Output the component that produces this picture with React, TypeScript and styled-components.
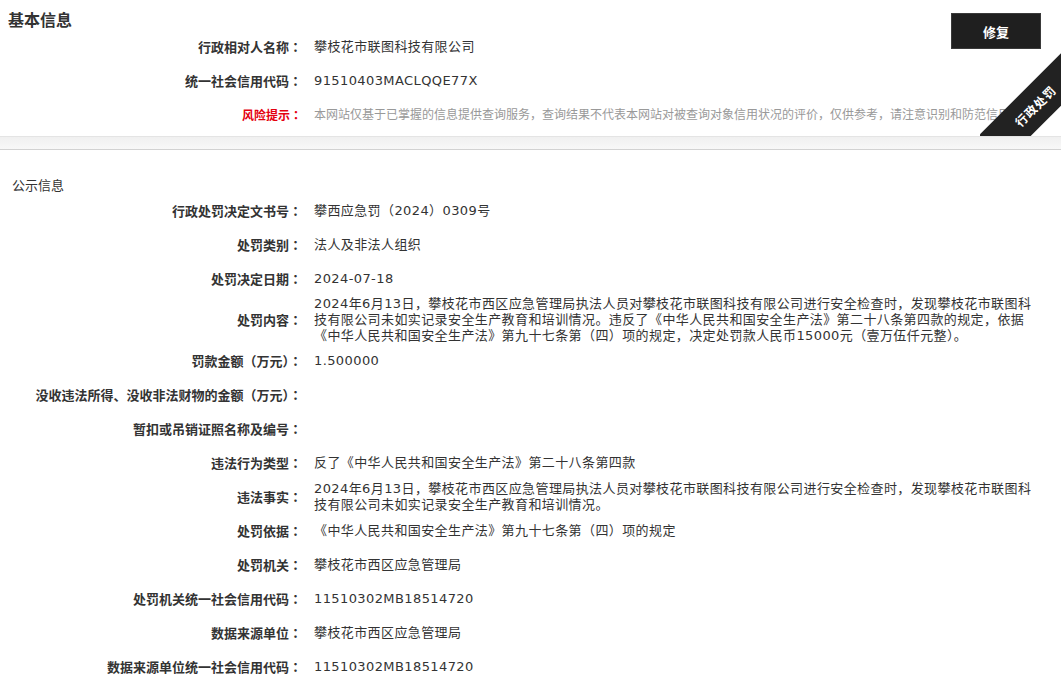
import React from 'react'
import styled, { createGlobalStyle } from 'styled-components'

type Item = { label: string; lines: string[] }

const company = '攀枝花市联图科技有限公司'

const items: Item[] = [
  { label: '行政处罚决定文书号', lines: ['攀西应急罚（2024）0309号'] },
  { label: '处罚类别', lines: ['法人及非法人组织'] },
  { label: '处罚决定日期', lines: ['2024-07-18'] },
  {
    label: '处罚内容',
    lines: [
      '2024年6月13日，攀枝花市西区应急管理局执法人员对攀枝花市联图科技有限公司进行安全检查时，发现攀枝花市联图科',
      '技有限公司未如实记录安全生产教育和培训情况。违反了《中华人民共和国安全生产法》第二十八条第四款的规定，依据',
      '《中华人民共和国安全生产法》第九十七条第（四）项的规定，决定处罚款人民币15000元（壹万伍仟元整）。',
    ],
  },
  { label: '罚款金额（万元）', lines: ['1.500000'] },
  { label: '没收违法所得、没收非法财物的金额（万元）', lines: [] },
  { label: '暂扣或吊销证照名称及编号', lines: [] },
  { label: '违法行为类型', lines: ['反了《中华人民共和国安全生产法》第二十八条第四款'] },
  {
    label: '违法事实',
    lines: [
      '2024年6月13日，攀枝花市西区应急管理局执法人员对攀枝花市联图科技有限公司进行安全检查时，发现攀枝花市联图科',
      '技有限公司未如实记录安全生产教育和培训情况。',
    ],
  },
  { label: '处罚依据', lines: ['《中华人民共和国安全生产法》第九十七条第（四）项的规定'] },
  { label: '处罚机关', lines: ['攀枝花市西区应急管理局'] },
  { label: '处罚机关统一社会信用代码', lines: ['11510302MB18514720'] },
  { label: '数据来源单位', lines: ['攀枝花市西区应急管理局'] },
  { label: '数据来源单位统一社会信用代码', lines: ['11510302MB18514720'] },
]

const GlobalStyle = createGlobalStyle`
  html, body {
    margin: 0;
    padding: 0;
    background: #fff;
  }
  body {
    font-family: "DejaVu Sans", "Noto Sans CJK SC", sans-serif;
    font-size: 13px;
    color: #333;
    overflow: hidden;
  }
`

export default function App() {
  return (
    <Page>
      <GlobalStyle />
      <Basic>
        <Title>基本信息</Title>
        <RepairButton>修复</RepairButton>
        <Row>
          <Label>
            行政相对人名称<Colon>：</Colon>
          </Label>
          <Value>{company}</Value>
        </Row>
        <Row $wide>
          <Label>
            统一社会信用代码<Colon>：</Colon>
          </Label>
          <Value>91510403MACLQQE77X</Value>
        </Row>
        <Row $wide>
          <Label $risk>
            风险提示<Colon>：</Colon>
          </Label>
          <Value $muted>
            本网站仅基于已掌握的信息提供查询服务，查询结果不代表本网站对被查询对象信用状况的评价，仅供参考，请注意识别和防范信用风险。
          </Value>
        </Row>
        <RibbonClip>
          <Ribbon>行政处罚</Ribbon>
        </RibbonClip>
      </Basic>
      <Divider />
      <Public>
        <SectionName>公示信息</SectionName>
        {items.map((it) => (
          <Row key={it.label}>
            <Label>
              {it.label}
              <Colon>：</Colon>
            </Label>
            <Value>
              {it.lines.map((l, i) => (
                <Line key={i}>{l}</Line>
              ))}
            </Value>
          </Row>
        ))}
      </Public>
    </Page>
  )
}

const Page = styled.div`
  width: 1061px;
  height: 682px;
  overflow: hidden;
`

const Basic = styled.section`
  position: relative;
  display: grid;
  grid-template-columns: 1fr 90px 20px;
  padding: 8px 0 4px;
`

const Title = styled.h2`
  grid-column: 1;
  margin: 0;
  padding-left: 8px;
  font-family: "Noto Sans CJK SC", sans-serif;
  font-size: 16px;
  line-height: 22px;
  font-weight: bold;
  color: #333;
`

const RepairButton = styled.button`
  grid-column: 2;
  grid-row: 1 / span 2;
  align-self: start;
  margin-top: 5px;
  height: 36px;
  border: 1px solid #3a3a3a;
  background: #1f1f1f;
  color: #fff;
  font-family: "Noto Sans CJK SC", sans-serif;
  font-size: 13px;
  font-weight: bold;
  cursor: pointer;
`

const Row = styled.div<{ $wide?: boolean }>`
  grid-column: ${(p) => (p.$wide ? '1 / -1' : '1')};
  display: flex;
  align-items: center;
  min-height: 34px;
  min-width: 0;
`

const Label = styled.div<{ $risk?: boolean }>`
  flex-shrink: 0;
  width: 302px;
  text-align: right;
  font-weight: bold;
  font-size: ${(p) => (p.$risk ? '12px' : '13px')};
  line-height: 18px;
  color: ${(p) => (p.$risk ? '#e4000f' : '#333')};
  white-space: nowrap;
`

const Colon = styled.span`
  font-family: "Noto Sans CJK TC", "Noto Sans CJK SC", sans-serif;
`

const Value = styled.div<{ $muted?: boolean }>`
  margin-left: 12px;
  min-width: 0;
  line-height: 16px;
  font-size: ${(p) => (p.$muted ? '12px' : '13px')};
  letter-spacing: ${(p) => (p.$muted ? '0' : '0.4px')};
  color: ${(p) => (p.$muted ? '#999' : '#333')};
  white-space: nowrap;
  overflow: hidden;
`

const Line = styled.div`
  white-space: nowrap;
`

const RibbonClip = styled.div`
  position: absolute;
  right: 0;
  bottom: 0;
  width: 81px;
  height: 86px;
  overflow: hidden;
  pointer-events: none;
`

const Ribbon = styled.div`
  position: absolute;
  left: -45px;
  top: 37px;
  width: 200px;
  height: 37px;
  line-height: 37px;
  transform: rotate(-45deg);
  background: #222;
  color: #fff;
  text-align: center;
  font-family: "Noto Sans CJK SC", sans-serif;
  font-size: 12px;
  font-weight: bold;
  letter-spacing: 1px;
`

const Divider = styled.div`
  height: 12px;
  border-top: 1px solid #e4e4e4;
  border-bottom: 1px solid #d2d2d2;
  background: linear-gradient(#f0f0f0, #f8f8f8);
`

const Public = styled.section`
  padding-top: 27px;
`

const SectionName = styled.div`
  padding-left: 12px;
  line-height: 17px;
  font-size: 13px;
  color: #333;
`
